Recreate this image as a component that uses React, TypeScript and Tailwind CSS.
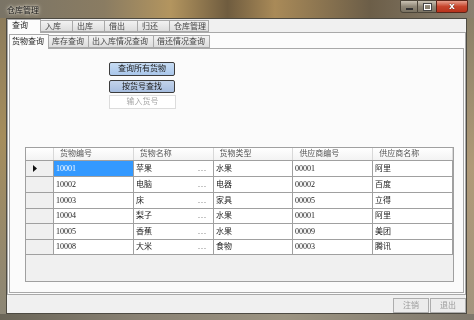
import React from "react";

const font = "font-['Liberation_Serif','Noto_Sans_CJK_SC',serif]";

const outerTabs = [
  { label: "查询", w: 34 },
  { label: "入库", w: 32 },
  { label: "出库", w: 32 },
  { label: "借出", w: 33 },
  { label: "归还", w: 32 },
  { label: "仓库管理", w: 39 },
];

const innerTabs = [
  { label: "货物查询", w: 40 },
  { label: "库存查询", w: 40 },
  { label: "出入库情况查询", w: 65 },
  { label: "借还情况查询", w: 56 },
];

const columns = ["货物编号", "货物名称", "货物类型", "供应商编号", "供应商名称"];

const rows = [
  { id: "10001", name: "苹果", type: "水果", sid: "00001", sname: "阿里", h: 16 },
  { id: "10002", name: "电脑", type: "电器", sid: "00002", sname: "百度", h: 16 },
  { id: "10003", name: "床", type: "家具", sid: "00005", sname: "立得", h: 16 },
  { id: "10004", name: "梨子", type: "水果", sid: "00001", sname: "阿里", h: 15 },
  { id: "10005", name: "香蕉", type: "水果", sid: "00009", sname: "美团", h: 16 },
  { id: "10008", name: "大米", type: "食物", sid: "00003", sname: "腾讯", h: 15 },
];

function TitleBar() {
  return (
    <div className="h-[20px] flex items-start relative">
      <span className="ml-[7px] mt-[6px] text-[8px] leading-[10px] text-[#111] [text-shadow:0_0_4px_#f4efe4,0_0_2px_#f4efe4]">
        仓库管理
      </span>
      <div className="absolute right-[6px] top-0 flex">
        <div className="w-[18px] h-[13px] border border-[#4b4438] rounded-bl-[3px] bg-[linear-gradient(180deg,#c9c2b3,#8f8777_50%,#7a7262)] flex items-center justify-center">
          <div className="w-[7px] h-[2px] bg-white mt-[4px] border border-[#333]" />
        </div>
        <div className="w-[18px] h-[13px] border-y border-[#4b4438] bg-[linear-gradient(180deg,#c9c2b3,#8f8777_50%,#7a7262)] flex items-center justify-center">
          <div className="w-[7px] h-[6px] border border-white outline outline-1 outline-[#444]" />
        </div>
        <div className="w-[32px] h-[13px] border border-[#5a2418] rounded-br-[3px] bg-[linear-gradient(180deg,#e8a08e,#c7452d_50%,#b8321c)] flex items-center justify-center">
          <span className="text-white text-[9px] font-bold leading-none font-['DejaVu_Sans',sans-serif] [text-shadow:0_0_1px_#000]">
            x
          </span>
        </div>
      </div>
    </div>
  );
}

function GoodsGrid() {
  return (
    <div className="ml-[15px] w-[429px] h-[135px] border border-[#a0a0a0] bg-[#f0f0f0]">
      <div className="flex h-[13px] bg-[linear-gradient(180deg,#ffffff,#f3f3f3)] border-b border-[#a0a0a0]">
        <div className="w-[28px] border-r border-[#d8d8d8]" />
        {columns.map((c) => (
          <div
            key={c}
            className="w-[80px] border-r border-[#d8d8d8] pl-[6px] text-[8px] leading-[12px] text-[#555]"
          >
            {c}
          </div>
        ))}
      </div>
      {rows.map((r, i) => (
        <div key={r.id} className="flex border-b border-[#a0a0a0]" style={{ height: r.h }}>
          <div className="w-[28px] bg-[#f0f0f0] border-r border-[#a0a0a0] flex items-center pl-[7px]">
            {i === 0 && (
              <svg width="4" height="7" viewBox="0 0 4 7">
                <path d="M0 0 L4 3.5 L0 7 Z" fill="#111" />
              </svg>
            )}
          </div>
          <div
            className={`w-[80px] border-r border-[#a0a0a0] flex items-center pl-[2px] text-[8px] ${
              i === 0 ? "bg-[#3399ff] text-white" : "bg-white text-[#222]"
            }`}
          >
            {r.id}
          </div>
          <div className="w-[80px] border-r border-[#a0a0a0] bg-white flex items-center justify-between pl-[2px] pr-[6px] text-[8px] text-[#222]">
            <span>{r.name}</span>
            <span className="tracking-[1px] text-[#444]">...</span>
          </div>
          <div className="w-[79px] border-r border-[#a0a0a0] bg-white flex items-center pl-[2px] text-[8px] text-[#222]">
            {r.type}
          </div>
          <div className="w-[80px] border-r border-[#a0a0a0] bg-white flex items-center pl-[2px] text-[8px] text-[#222]">
            {r.sid}
          </div>
          <div className="w-[80px] border-r border-[#a0a0a0] bg-white flex items-center pl-[2px] text-[8px] text-[#222]">
            {r.sname}
          </div>
        </div>
      ))}
    </div>
  );
}

export default function App() {
  return (
    <div
      className={`w-[474px] h-[320px] overflow-hidden flex flex-col will-change-transform ${font} bg-[linear-gradient(90deg,#7a7466_0%,#8a7c62_22%,#b3955f_36%,#6f5c3f_48%,#a98a58_58%,#6c5e48_78%,#8a8070_100%)]`}
    >
      <TitleBar />
      <div className="flex flex-1">
        <div className="w-[6px] bg-[linear-gradient(180deg,#8c7c5c,#a58d5c_40%,#8c8676_100%)]" />
        <div className="flex-1 flex flex-col bg-[#f0f0f0] border border-[#4d4a42]">
          {/* top tab strip */}
          <div className="h-[13px] flex items-end">
            {outerTabs.map((t, i) => (
              <div
                key={t.label}
                style={{ width: t.w }}
                className={
                  i === 0
                    ? "h-[14px] -mb-[1px] z-10 bg-[#fcfcfc] border border-b-0 border-[#a9a9a9] text-[8px] leading-[12px] pl-[4px] text-[#222]"
                    : "h-[12px] bg-[linear-gradient(180deg,#f2f2f2,#dddddd)] border border-l-0 border-[#a9a9a9] text-[8px] leading-[11px] pl-[4px] text-[#444]"
                }
              >
                {t.label}
              </div>
            ))}
          </div>
          <div className="h-[263px] bg-[#fcfcfc] border border-[#a9a9a9] px-[1px] pt-[1px] flex flex-col">
            {/* inner tab strip */}
            <div className="h-[14px] flex items-end">
              {innerTabs.map((t, i) => (
                <div
                  key={t.label}
                  style={{ width: t.w }}
                  className={
                    i === 0
                      ? "h-[15px] -mb-[1px] z-10 bg-[#fcfcfc] border border-b-0 border-[#a9a9a9] text-[8px] leading-[13px] pl-[2px] text-[#222]"
                      : "h-[13px] bg-[linear-gradient(180deg,#f2f2f2,#dddddd)] border border-l-0 border-[#a9a9a9] text-[8px] leading-[12px] pl-[3px] text-[#444]"
                  }
                >
                  {t.label}
                </div>
              ))}
            </div>
            <div className="flex-1 mb-[1px] bg-[#fbfbfb] border border-[#a9a9a9] flex flex-col">
              <div className="ml-[99px] mt-[13px] flex flex-col gap-[4px] w-[66px]">
                <div className="h-[14px] rounded-[2px] border border-[#3c3c3c] bg-[linear-gradient(180deg,#c7dcf3,#a9c6ea)] text-[8px] leading-[12px] text-center text-[#1a1a1a]">
                  查询所有货物
                </div>
                <div className="h-[13px] rounded-[2px] border border-[#3c3c3c] bg-[linear-gradient(180deg,#c3d3ea,#a6bddf)] text-[8px] leading-[11px] text-center text-[#1a1a1a]">
                  按货号查找
                </div>
                <div className="h-[14px] -mt-[2px] w-[67px] border border-[#dcdcdc] bg-white text-[8px] leading-[12px] text-center text-[#a8a8a8]">
                  输入货号
                </div>
              </div>
              <div className="mt-[38px]">
                <GoodsGrid />
              </div>
            </div>
          </div>
          {/* bottom buttons */}
          <div className="flex justify-end mt-[3px]">
            <div className="w-[36px] h-[15px] border border-[#adadad] bg-[#ececec] text-[8px] leading-[13px] text-center text-[#9a9a9a]">
              注销
            </div>
            <div className="w-[36px] h-[15px] ml-[1px] border border-[#adadad] bg-[#ececec] text-[8px] leading-[13px] text-center text-[#9a9a9a]">
              退出
            </div>
          </div>
        </div>
        <div className="w-[7px] bg-[linear-gradient(180deg,#8a8068,#b09a78_50%,#a2947e_100%)]" />
      </div>
      <div className="h-[6px] bg-[linear-gradient(90deg,#6a6558,#8a8274_30%,#9c9482_60%,#7f786c)]" />
    </div>
  );
}
